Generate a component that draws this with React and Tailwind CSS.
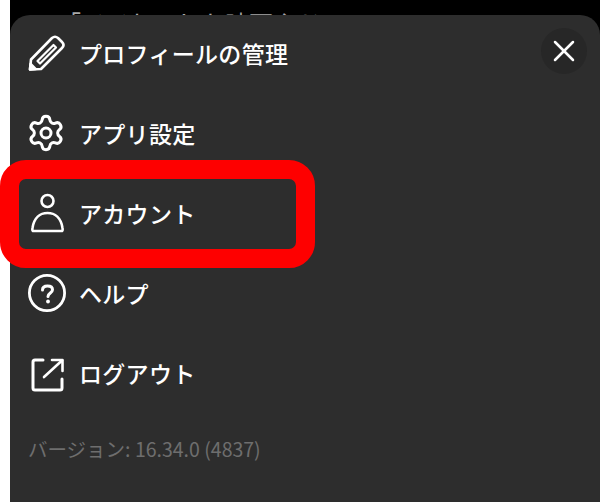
import { Settings, X } from "lucide-react";

function PencilIcon() {
  return (
    <svg width="40" height="40" viewBox="0 0 40 40" fill="none" stroke="currentColor" strokeWidth="2.6" strokeLinejoin="round" strokeLinecap="round">
      <path d="M3 36.5 L4 26.5 L25 5 Q28 2.5 31 5 L35 9 Q38 12 35 15 L14 36 Z" />
      <path d="M10.5 28 L26.5 12 L29 14.5 L13 30.5 Z" strokeWidth="2.2" />
      <path d="M3 36.5 L3.6 31 L8.5 36 Z" fill="currentColor" />
    </svg>
  );
}

function UserIcon() {
  return (
    <svg width="40" height="40" viewBox="0 0 40 40" fill="none" stroke="currentColor" strokeWidth="2.6" strokeLinejoin="round">
      <circle cx="20.5" cy="8" r="6" />
      <path d="M6 38 Q5 37.5 5.5 35 C7 25 13 20 20.5 20 C28 20 34 25 35.5 35 Q36 37.5 35 38 Z" />
    </svg>
  );
}

function HelpIcon() {
  return (
    <svg width="40" height="40" viewBox="0 0 40 40" fill="none" stroke="currentColor" strokeWidth="2.8" strokeLinecap="round">
      <circle cx="20" cy="20" r="17.6" />
      <path d="M15.5 17 C15.5 14.5 17.5 13 20.5 13 C23.5 13 25.5 14.5 25.5 16.8 C25.5 20 21 20 21 23.5" strokeWidth="3" />
      <circle cx="21" cy="28.5" r="1.9" fill="currentColor" stroke="none" />
    </svg>
  );
}

function LogoutIcon() {
  return (
    <svg width="40" height="40" viewBox="0 0 40 40" fill="none" stroke="currentColor" strokeWidth="3" strokeLinecap="round" strokeLinejoin="round">
      <path d="M16 7 L8 7 Q6 7 6 9 L6 35 Q6 37 8 37 L33 37 Q35 37 35 35 L35 26" />
      <path d="M17 24 L35 7.5" strokeWidth="2.6" />
      <path d="M25 7 L35.5 7 L35.5 18" strokeWidth="2.6" />
    </svg>
  );
}

const items = [
  { label: "プロフィールの管理", icon: <PencilIcon /> },
  { label: "アプリ設定", icon: <Settings size={40} strokeWidth={1.8} className="-translate-x-px" /> },
  { label: "アカウント", icon: <UserIcon /> },
  { label: "ヘルプ", icon: <HelpIcon /> },
  { label: "ログアウト", icon: <LogoutIcon /> },
];

export default function App() {
  return (
    <div className="relative w-[600px] h-[502px] overflow-hidden bg-white pl-[10px] font-['Noto_Sans_CJK_JP','Noto_Sans',sans-serif]">
      <div className="flex h-full flex-col bg-black">
        <div className="h-[15px] overflow-hidden pl-[47px] pt-[7px] text-[24px] leading-[32px] whitespace-nowrap text-[#a8a8a8]">
          「イイね」した映画やドラマ
        </div>
        <div className="relative flex flex-1 flex-col rounded-t-[20px] bg-[#2d2d2d] pt-2">
          <button className="absolute right-[13px] top-[13px] flex h-[46px] w-[46px] items-center justify-center rounded-full bg-[#272727] text-white">
            <X size={36} strokeWidth={1.7} />
          </button>
          <div className="flex flex-col gap-5">
            {items.map((item) => (
              <div key={item.label} className="flex h-[60px] items-center gap-[12px] pl-[17px] text-white">
                {item.icon}
                <span className="text-[23px] font-medium leading-none tracking-[0.3px]">{item.label}</span>
              </div>
            ))}
          </div>
          <div className="mt-[34px] pl-[18px] text-[19.5px] leading-6 text-[#6e6e6e]">
            バージョン: 16.34.0 (4837)
          </div>
        </div>
      </div>
      {/* red highlight drawn over the account row */}
      <div className="absolute left-0 top-[160px] h-[108px] w-[315px] rounded-[26px] border-[19px] border-[#fe0000]" />
    </div>
  );
}
